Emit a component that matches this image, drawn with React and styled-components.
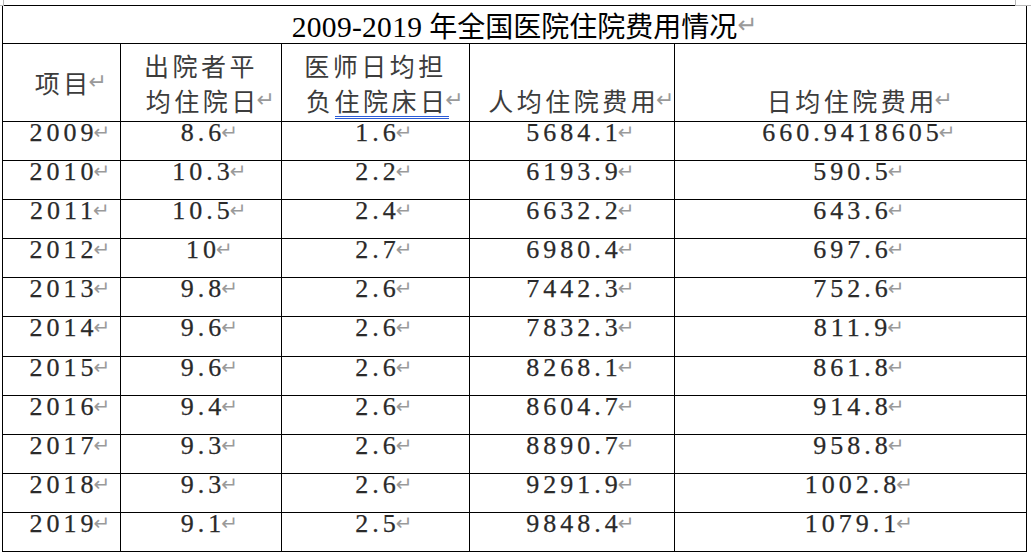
import React from 'react';
import styled, { createGlobalStyle } from 'styled-components';

const GlobalStyle = createGlobalStyle`
  html, body {
    margin: 0;
    padding: 0;
    background: #fff;
  }
  body {
    font-family: "Liberation Serif", "Noto Sans CJK SC", serif;
  }
`;

const Page = styled.div`
  position: relative;
  width: 1031px;
  height: 558px;
  padding: 5px 0 0 2px;
  box-sizing: border-box;
  overflow: hidden;
`;

// Word's little text-boundary corners at the top of the page
const CropMark = styled.span`
  position: absolute;
  top: 0;
  height: 5px;
  width: ${p => p.$w}px;
  border-bottom: 1px solid #b8b8b8;
  ${p => (p.$side === 'left'
    ? 'left: 0; border-right: 1px solid #b8b8b8;'
    : 'left: 1015px; border-left: 1px solid #b8b8b8;')}
`;

const Sheet = styled.table`
  border-collapse: collapse;
  table-layout: fixed;
  width: 1025px;
  color: #2a2a2a;
  font-size: 26px;
`;

const Row = styled.tr`
  height: ${p => p.$h}px;
`;

const Cell = styled.td`
  border: 1px solid #000;
  padding: ${p => p.$pt || 0}px 0 0 0;
  text-align: center;
  vertical-align: top;
  white-space: nowrap;
  letter-spacing: 4px;
  line-height: 22px;
  -webkit-text-stroke: 0.25px #2a2a2a;
`;

const HeadCell = styled(Cell)`
  color: #3c3c3c;
  font-size: 25px;
  letter-spacing: 3.5px;
  line-height: 35px;
  -webkit-text-stroke: 0;
`;

const TitleCell = styled(Cell)`
  color: #000;
  font-size: 28px;
  letter-spacing: 0;
  line-height: 30px;
  padding-top: 6px;
  -webkit-text-stroke: 0;
`;

const Years = styled.span`
  font-size: 29.5px;
  letter-spacing: 0.3px;
`;

// paragraph mark shown by Word's formatting view; takes no room in centring
const Mark = styled.span`
  display: inline-block;
  width: 0;
  margin-left: ${p => p.$ml ?? -4}px;
  font-family: "DejaVu Sans", sans-serif;
  font-size: ${p => p.$size || 20}px;
  line-height: 14px;
  letter-spacing: 0;
  vertical-align: ${p => p.$raise ?? 2}px;
  color: #9a9a9a;
  -webkit-text-stroke: 0;
`;

// Word's blue double "grammar" underline
const Squiggle = styled.span`
  border-bottom: 3px double #2a5bd7;
`;

const rows = [
  ['2009', '8.6', '1.6', '5684.1', '660.9418605'],
  ['2010', '10.3', '2.2', '6193.9', '590.5'],
  ['2011', '10.5', '2.4', '6632.2', '643.6'],
  ['2012', '10', '2.7', '6980.4', '697.6'],
  ['2013', '9.8', '2.6', '7442.3', '752.6'],
  ['2014', '9.6', '2.6', '7832.3', '811.9'],
  ['2015', '9.6', '2.6', '8268.1', '861.8'],
  ['2016', '9.4', '2.6', '8604.7', '914.8'],
  ['2017', '9.3', '2.6', '8890.7', '958.8'],
  ['2018', '9.3', '2.6', '9291.9', '1002.8'],
  ['2019', '9.1', '2.5', '9848.4', '1079.1'],
];

const widths = [118, 161, 188, 205, 352];

export default function App() {
  const headMark = <Mark $size={22} $ml={-3.5} $raise={4}>↵</Mark>;
  return (
    <Page>
      <GlobalStyle />
      <CropMark $side="left" $w={3} />
      <CropMark $side="right" $w={16} />
      <Sheet>
        <colgroup>
          {widths.map((w, i) => <col key={i} style={{ width: w }} />)}
        </colgroup>
        <tbody>
          <Row $h={38}>
            <TitleCell colSpan={5}>
              <Years>2009-2019</Years> 年全国医院住院费用情况
              <Mark $size={24} $ml={0} $raise={4}>↵</Mark>
            </TitleCell>
          </Row>
          <Row $h={78}>
            <HeadCell $pt={23}>项目{headMark}</HeadCell>
            <HeadCell $pt={6}>出院者平<br />均住院日{headMark}</HeadCell>
            <HeadCell $pt={6}>
              医师日均担<br />负<Squiggle>住院床日</Squiggle>{headMark}
            </HeadCell>
            <HeadCell $pt={41}>人均住院费用{headMark}</HeadCell>
            <HeadCell $pt={41}>日均住院费用{headMark}</HeadCell>
          </Row>
          {rows.map(r => (
            <Row $h={39.1} key={r[0]}>
              {r.map((v, i) => (
                <Cell key={i}>{v}<Mark>↵</Mark></Cell>
              ))}
            </Row>
          ))}
        </tbody>
      </Sheet>
    </Page>
  );
}
